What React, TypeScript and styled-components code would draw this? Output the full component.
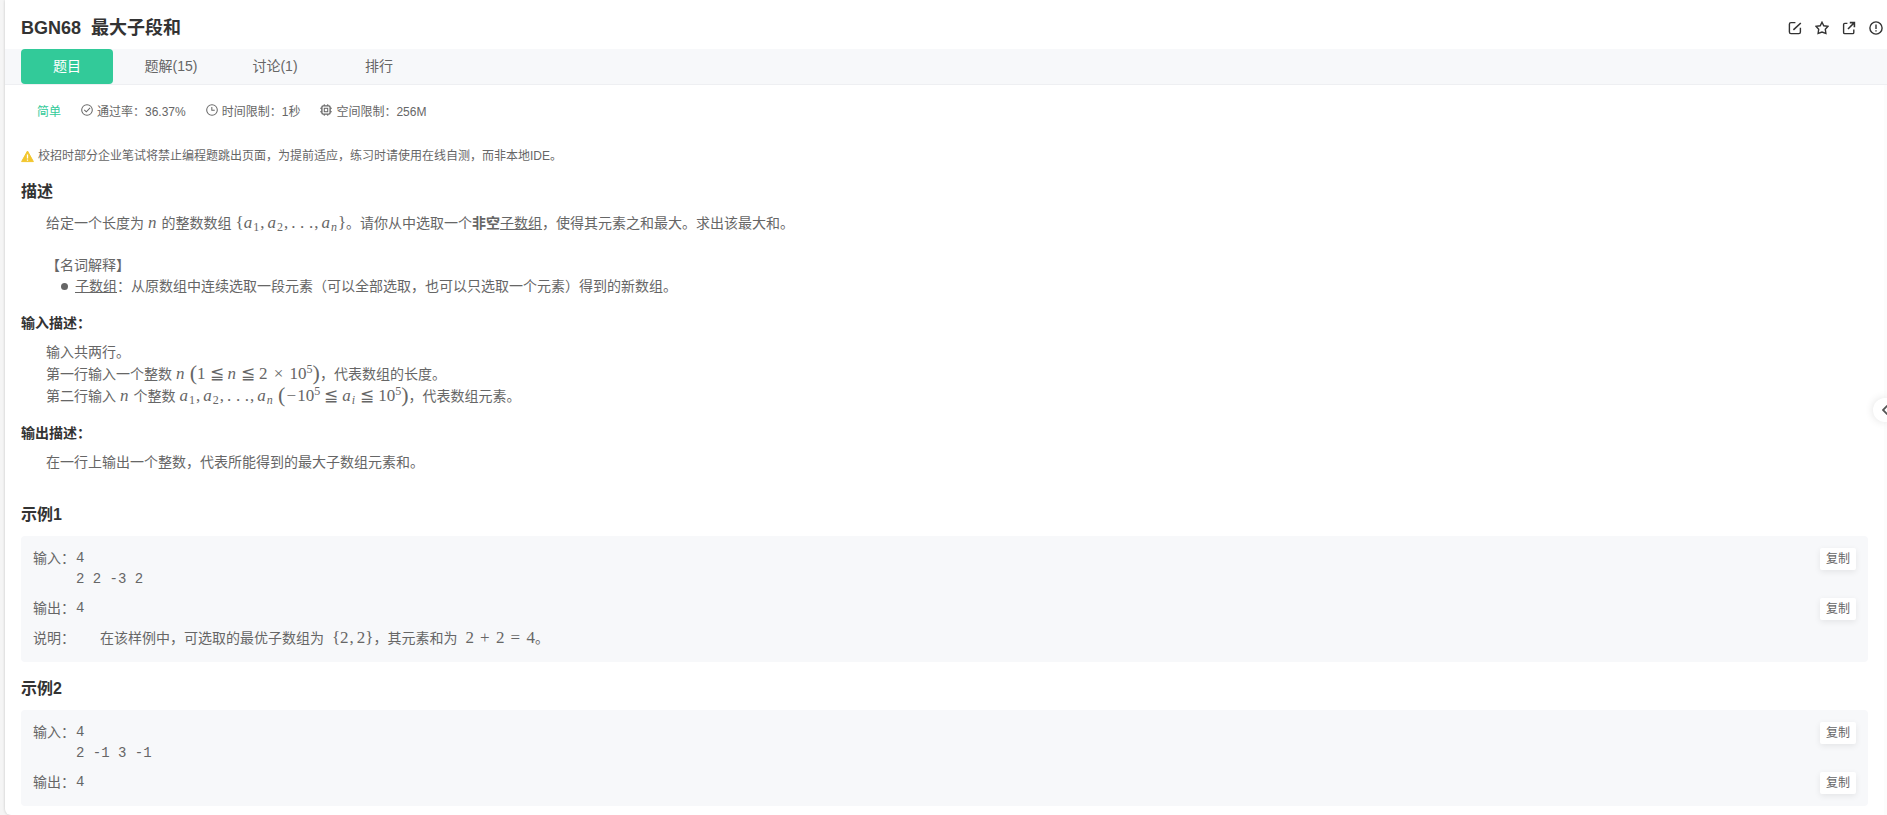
import React from "react";
import styled, { createGlobalStyle } from "styled-components";

const sans = `"Liberation Sans", Arial, "Noto Sans CJK SC", sans-serif`;
const mono = `"Liberation Mono", "Courier New", "Noto Sans CJK SC", monospace`;

const GlobalStyle = createGlobalStyle`
  *, *::before, *::after { box-sizing: border-box; }
  body {
    margin: 0;
    background: #f5f5f5;
    font-family: ${sans};
    font-size: 14px;
    line-height: 21px;
    color: #666;
  }
  h1, h2, h3, p, ul, pre, dl, dd { margin: 0; padding: 0; }
  button { font: inherit; color: inherit; border: 0; padding: 0; background: none; cursor: pointer; }
`;

const Panel = styled.main`
  position: relative;
  min-height: 100vh;
  margin-left: 5px;
  background: #fff;
  border-bottom-left-radius: 6px;
  box-shadow: 0 0 3px rgba(0, 0, 0, 0.2);
  overflow: hidden;
`;

const Header = styled.header`
  display: flex;
  align-items: center;
  justify-content: space-between;
  height: 49px;
  padding: 6px 4px 0 16px;
`;

const Title = styled.h1`
  font-size: 18px;
  line-height: 24px;
  font-weight: 700;
  color: #333;
  white-space: pre;
`;

const Actions = styled.div`
  display: flex;
  gap: 13px;
`;

const IconButton = styled.button`
  display: flex;
  width: 14px;
  height: 14px;
  color: #333;
`;

const TabBar = styled.nav`
  display: flex;
  gap: 12px;
  height: 36px;
  padding-left: 16px;
  background: #f7f8fa;
  border-bottom: 1px solid #eeeff2;
`;

const Tab = styled.button<{ $active?: boolean }>`
  width: 92px;
  height: 35px;
  border-radius: 4px;
  color: ${(p) => (p.$active ? "#fff" : "#666")};
  background: ${(p) => (p.$active ? "#32ca99" : "transparent")};
`;

const Body = styled.div`
  padding: 0 16px 9px;
  border-right: 3px solid #fcfcfc;
`;

const MetaRow = styled.div`
  display: flex;
  align-items: center;
  gap: 20px;
  height: 52px;
  padding: 2px 0 0 16px;
  font-size: 12px;
`;

const Difficulty = styled.span`
  color: #32ca99;
`;

const MetaItem = styled.span`
  display: flex;
  align-items: center;
  gap: 4px;

  svg {
    margin-bottom: 4px;
  }
`;

const Notice = styled.p`
  display: flex;
  align-items: center;
  gap: 4px;
  margin-top: 9px;
  font-size: 12px;
  line-height: 20px;
`;

const SectionTitle = styled.h2<{ $gap: number }>`
  margin-top: ${(p) => p.$gap}px;
  margin-bottom: 9px;
  font-size: 16px;
  line-height: 24px;
  font-weight: 700;
  color: #333;
`;

const SubTitle = styled.h3`
  margin: 16px 0 8px;
  font-size: 14px;
  line-height: 21px;
  font-weight: 700;
  color: #333;
`;

const Prose = styled.div`
  padding-left: 25px;
`;

const Line = styled.p<{ $tall?: boolean }>`
  min-height: 21px;
  line-height: ${(p) => (p.$tall ? 22 : 21)}px;
`;

const Terms = styled.ul`
  list-style: none;
`;

const Term = styled.li`
  display: flex;
  align-items: center;
  padding-left: 15px;

  &::before {
    content: "";
    width: 7px;
    height: 7px;
    margin-right: 7px;
    border-radius: 50%;
    background: #666;
  }
`;

const Math = styled.span<{ $closed?: boolean }>`
  margin: 0 ${(p) => (p.$closed ? 0 : 4)}px 0 4px;
  font-family: "Liberation Serif", "Times New Roman", "DejaVu Serif", serif;
  font-size: 17px;
  line-height: 1px;
  white-space: nowrap;
`;

const Var = styled.i`
  padding: 0 1px 0 0;
`;

const Op = styled.span<{ $unary?: boolean }>`
  display: inline-flex;
  justify-content: center;
  width: 12px;
  margin: 0 ${(p) => (p.$unary ? 0 : 5)}px;
`;

const Comma = styled.span`
  margin: 0 3px 0 1px;
`;

const Dots = styled.span`
  display: inline-flex;
  width: 22px;
  justify-content: space-between;
`;

const Script = styled.span<{ $up?: boolean }>`
  position: relative;
  top: ${(p) => (p.$up ? "-6px" : "3px")};
  font-size: 12px;
`;

const Paren = styled.span`
  position: relative;
  top: 1px;
  font-size: 22px;
`;

const Sample = styled.div`
  display: flex;
  flex-direction: column;
  gap: 8px;
  padding: 12px;
  background: #f7f8fa;
  border-radius: 4px;
`;

const SampleRow = styled.div`
  display: flex;
  align-items: flex-start;
  min-height: 22px;
`;

const SampleLabel = styled.span`
  flex: none;
  width: 43px;
`;

const Code = styled.pre`
  flex: 1;
  font-family: ${mono};
  font-size: 14px;
  line-height: 21px;
`;

const Explanation = styled.p`
  padding-left: 24px;
  white-space: pre-wrap;
`;

const CopyButton = styled.button`
  width: 36px;
  height: 22px;
  border-radius: 2px;
  background: #fff;
  font-size: 12px;
  line-height: 22px;
  box-shadow: 0 2px 6px rgba(0, 0, 0, 0.08);
`;

const Drawer = styled.button`
  position: absolute;
  top: 398px;
  right: 0;
  display: flex;
  align-items: center;
  justify-content: flex-end;
  width: 14px;
  height: 24px;
  border-radius: 12px 0 0 12px;
  background: #fff;
  color: #555;
  box-shadow: 0 0 8px rgba(0, 0, 0, 0.12);
`;

const Glyph = ({ size = 14, width = 1.4, children }: { size?: number; width?: number; children: React.ReactNode }) => (
  <svg width={size} height={size} viewBox="0 0 14 14" fill="none" stroke="currentColor" strokeWidth={width} aria-hidden="true">
    {children}
  </svg>
);

const EditIcon = () => (
  <Glyph>
    <path d="M7.4 1.6H3Q1.4 1.6 1.4 3.2V11Q1.4 12.6 3 12.6H10.8Q12.4 12.6 12.4 11V6.8" />
    <path d="M5.4 8.8L12.8 2" strokeWidth="1.6" />
  </Glyph>
);

const StarIcon = () => (
  <Glyph>
    <path d="M7 1.2L8.8 4.8L12.9 5.4L10.3 8.3L10.9 12.4L7 11L3.1 12.4L3.7 8.3L1.1 5.4L5.2 4.8Z" />
  </Glyph>
);

const ShareIcon = () => (
  <Glyph>
    <path d="M5.4 2.4H2.8Q1.6 2.4 1.6 3.6V11.4Q1.6 12.6 2.8 12.6H10.6Q11.8 12.6 11.8 11.4V8.4" />
    <path d="M7.8 1.6H12.4V6.2M12.2 1.8L6 8" strokeWidth="1.6" />
  </Glyph>
);

const AlertIcon = () => (
  <Glyph>
    <circle cx="7" cy="7" r="6.1" />
    <path d="M7 3.4V8M7 9.2V10.6" />
  </Glyph>
);

const CheckIcon = () => (
  <Glyph size={12} width={1.2}>
    <circle cx="7" cy="7" r="6.2" />
    <path d="M3.8 6.8L6.2 9.2L10.6 4.6" />
  </Glyph>
);

const ClockIcon = () => (
  <Glyph size={12} width={1.2}>
    <circle cx="7" cy="7" r="6.2" />
    <path d="M6.8 3.4V7.4H10.2" />
  </Glyph>
);

const ChipIcon = () => (
  <Glyph size={12} width={1.2}>
    <rect x="2.2" y="2.2" width="9.6" height="9.6" rx="1.6" strokeWidth="1.6" />
    <rect x="5" y="5" width="4" height="4" />
    <path d="M5 0.2V2M9 0.2V2M5 12V13.8M9 12V13.8M0.2 5H2M0.2 9H2M12 5H13.8M12 9H13.8" />
  </Glyph>
);

const WarnIcon = () => (
  <svg width="13" height="13" viewBox="0 0 13 13" aria-hidden="true">
    <path d="M6.5 1L12.4 11.6H0.6Z" fill="#f2c62e" stroke="#f2c62e" strokeLinejoin="round" />
    <path d="M6.5 4.6V8.4M6.5 9.4V10.8" stroke="#fff" strokeWidth="1.3" />
  </svg>
);

const ChevronIcon = () => (
  <svg width="5" height="10" viewBox="0 0 5 10" fill="none" stroke="currentColor" strokeWidth="1.8" aria-hidden="true">
    <path d="M5.4 0.6L1 5L5.4 9.4" />
  </svg>
);

const Sequence = () => (
  <>
    <Var>a</Var>
    <Script>1</Script>
    <Comma>,</Comma>
    <Var>a</Var>
    <Script>2</Script>
    <Comma>,</Comma>
    <Dots>
      <span>.</span>
      <span>.</span>
      <span>.</span>
    </Dots>
    <Comma>,</Comma>
    <Var>a</Var>
    <Script>
      <Var>n</Var>
    </Script>
  </>
);

const SampleCase = ({ input, output, children }: { input: string; output: string; children?: React.ReactNode }) => (
  <Sample>
    <SampleRow>
      <SampleLabel>输入：</SampleLabel>
      <Code>{input}</Code>
      <CopyButton>复制</CopyButton>
    </SampleRow>
    <SampleRow>
      <SampleLabel>输出：</SampleLabel>
      <Code>{output}</Code>
      <CopyButton>复制</CopyButton>
    </SampleRow>
    {children && (
      <SampleRow>
        <SampleLabel>说明：</SampleLabel>
        <Explanation>{children}</Explanation>
      </SampleRow>
    )}
  </Sample>
);

export default function App() {
  return (
    <>
      <GlobalStyle />
      <Panel>
        <Header>
          <Title>{"BGN68  最大子段和"}</Title>
          <Actions>
            <IconButton aria-label="笔记"><EditIcon /></IconButton>
            <IconButton aria-label="收藏"><StarIcon /></IconButton>
            <IconButton aria-label="分享"><ShareIcon /></IconButton>
            <IconButton aria-label="反馈"><AlertIcon /></IconButton>
          </Actions>
        </Header>
        <TabBar>
          <Tab $active>题目</Tab>
          <Tab>题解(15)</Tab>
          <Tab>讨论(1)</Tab>
          <Tab>排行</Tab>
        </TabBar>
        <Body>
          <MetaRow>
            <Difficulty>简单</Difficulty>
            <MetaItem><CheckIcon />通过率：36.37%</MetaItem>
            <MetaItem><ClockIcon />时间限制：1秒</MetaItem>
            <MetaItem><ChipIcon />空间限制：256M</MetaItem>
          </MetaRow>
          <Notice>
            <WarnIcon />
            校招时部分企业笔试将禁止编程题跳出页面，为提前适应，练习时请使用在线自测，而非本地IDE。
          </Notice>

          <SectionTitle $gap={14}>描述</SectionTitle>
          <Prose>
            <Line>
              给定一个长度为<Math><Var>n</Var></Math>的整数数组
              <Math $closed>{"{"}<Sequence />{"}"}</Math>。请你从中选取一个<b>非空</b><u>子数组</u>，使得其元素之和最大。求出该最大和。
            </Line>
            <Line />
            <Line>【名词解释】</Line>
            <Terms>
              <Term>
                <span><u>子数组</u>：从原数组中连续选取一段元素（可以全部选取，也可以只选取一个元素）得到的新数组。</span>
              </Term>
            </Terms>
          </Prose>

          <SubTitle>输入描述：</SubTitle>
          <Prose>
            <Line>输入共两行。</Line>
            <Line $tall>
              第一行输入一个整数
              <Math $closed>
                <Var>n</Var> <Paren>(</Paren>1<Op>≦</Op><Var>n</Var><Op>≦</Op>2<Op>×</Op>10<Script $up>5</Script><Paren>)</Paren>
              </Math>，代表数组的长度。
            </Line>
            <Line $tall>
              第二行输入<Math><Var>n</Var></Math>个整数
              <Math $closed>
                <Sequence /> <Paren>(</Paren><Op $unary>−</Op>10<Script $up>5</Script><Op>≦</Op><Var>a</Var><Script><Var>i</Var></Script><Op>≦</Op>10<Script $up>5</Script><Paren>)</Paren>
              </Math>，代表数组元素。
            </Line>
          </Prose>

          <SubTitle>输出描述：</SubTitle>
          <Prose>
            <Line>在一行上输出一个整数，代表所能得到的最大子数组元素和。</Line>
          </Prose>

          <SectionTitle $gap={30}>示例1</SectionTitle>
          <SampleCase input={"4\n2 2 -3 2"} output="4">
            在该样例中，可选取的最优子数组为 <Math $closed>{"{"}2<Comma>,</Comma>2{"}"}</Math>，其元素和为 <Math $closed>2<Op>+</Op>2<Op>=</Op>4</Math>。
          </SampleCase>

          <SectionTitle $gap={15}>示例2</SectionTitle>
          <SampleCase input={"4\n2 -1 3 -1"} output="4" />
        </Body>
        <Drawer aria-label="展开侧栏"><ChevronIcon /></Drawer>
      </Panel>
    </>
  );
}
